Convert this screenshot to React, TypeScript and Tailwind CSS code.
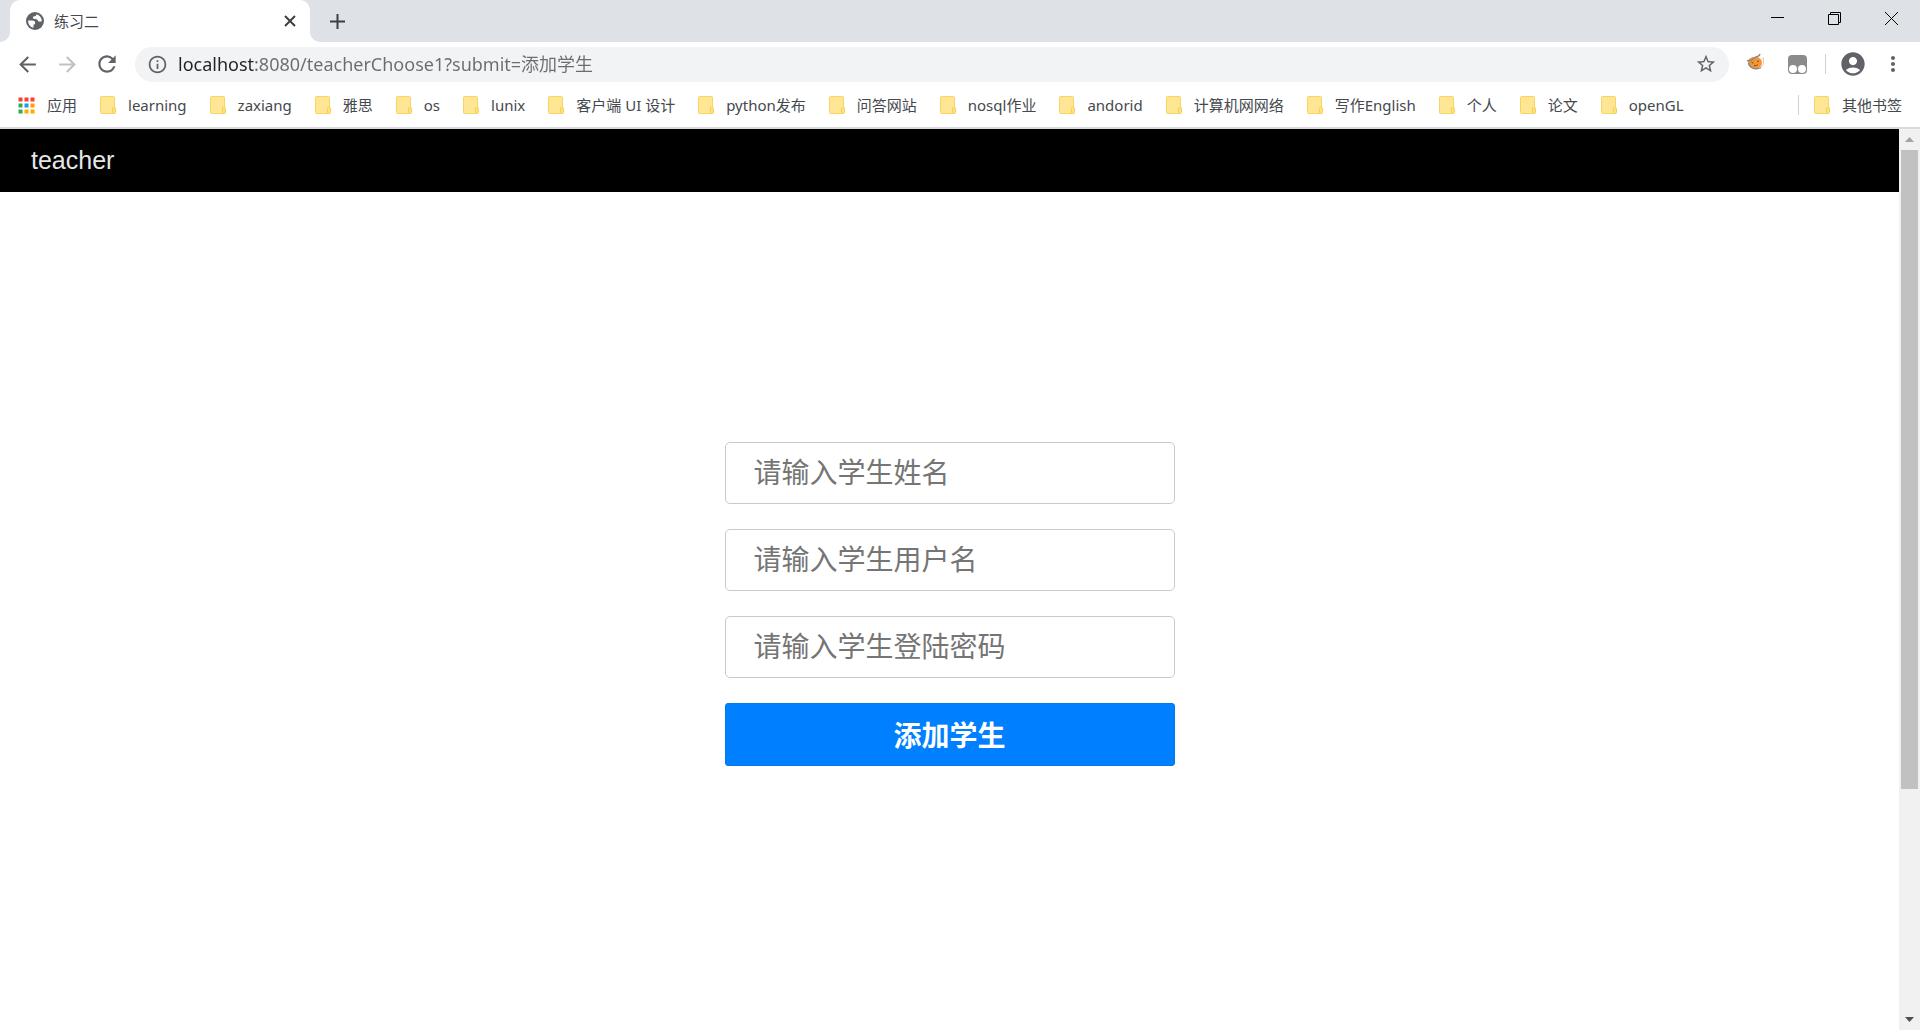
import type { ReactNode } from 'react';
import {
  MdAccountCircle,
  MdArrowBack,
  MdArrowForward,
  MdInfoOutline,
  MdMoreVert,
  MdRefresh,
  MdStarBorder,
} from 'react-icons/md';

const bookmarks = [
  'learning',
  'zaxiang',
  '雅思',
  'os',
  'lunix',
  '客户端 UI 设计',
  'python发布',
  '问答网站',
  'nosql作业',
  'andorid',
  '计算机网网络',
  '写作English',
  '个人',
  '论文',
  'openGL',
];

const fields = [
  { id: 'name', label: '请输入学生姓名', type: 'text' },
  { id: 'username', label: '请输入学生用户名', type: 'text' },
  { id: 'password', label: '请输入学生登陆密码', type: 'password' },
];

const appColors = [
  '#f44336', '#f44336', '#f44336',
  '#34a853', '#2196f3', '#ffa000',
  '#34a853', '#fbab00', '#fbab00',
];

const IconButton = ({
  label,
  className = 'w-10',
  children,
}: {
  label: string;
  className?: string;
  children: ReactNode;
}) => (
  <button
    type="button"
    aria-label={label}
    className={`flex h-full shrink-0 items-center justify-center ${className}`}
  >
    {children}
  </button>
);

const GlobeIcon = () => (
  <svg width="18" height="18" viewBox="0 0 18 18" className="shrink-0" aria-hidden="true">
    <circle cx="9" cy="9" r="9" fill="#5f6368" />
    <path
      d="M10.5 2.2c-.2 1.300-.9 2-2.200 2.100-1.200.1-1.500.8-1.300 1.700.2.900 1 1 2.200 1.100 1.800.1 2.800.9 3 2.400h3.600A7 7 0 0 0 10.500 2.200z"
      fill="#fff"
    />
    <path
      d="M2.100 8.500h4.200c1.800 0 2.900.8 2.900 2.400 0 1.100-.6 1.600-1.700 1.700v3.200A7 7 0 0 1 2.100 8.500z"
      fill="#fff"
    />
  </svg>
);

const FolderIcon = () => (
  <svg width="16" height="18" viewBox="0 0 16 18" className="shrink-0" aria-hidden="true">
    <rect x="0.5" y="0.5" width="14" height="17" rx="1" fill="#ffe694" stroke="#f7d560" />
    <rect x="12.500" y="11.500" width="3" height="6" rx="1" fill="#ffe27a" stroke="#f5cf55" />
  </svg>
);

const AppsIcon = () => (
  <svg width="17" height="17" viewBox="0 0 17 17" className="shrink-0" aria-hidden="true">
    {appColors.map((color, i) => (
      <rect
        key={i}
        x={(i % 3) * 6 + 0.5}
        y={Math.floor(i / 3) * 6 + 0.5}
        width="4"
        height="4"
        fill={color}
      />
    ))}
  </svg>
);

const Bookmark = ({ icon, children }: { icon: ReactNode; children: ReactNode }) => (
  <a href="#" className="flex shrink-0 items-center gap-3 whitespace-nowrap">
    {icon}
    {children}
  </a>
);

const TabStrip = () => (
  <div className="flex h-[42px] bg-[#dee1e6]">
    <svg width="10" height="10" className="shrink-0 self-end" aria-hidden="true">
      <path d="M10 0v10H0A10 10 0 0 0 10 0z" fill="#fff" />
    </svg>
    <div className="flex w-[300px] items-center rounded-t-[10px] bg-white pr-[14px] pl-4">
      <GlobeIcon />
      <span className="ml-[10px] flex-1 text-[15px] text-[#45494d]">练习二</span>
      <button type="button" aria-label="关闭标签页">
        <svg width="12" height="12" viewBox="0 0 12 12" aria-hidden="true">
          <path d="M1 1l10 10M11 1L1 11" stroke="#3c4043" strokeWidth="2" />
        </svg>
      </button>
    </div>
    <svg width="10" height="10" className="shrink-0 self-end" aria-hidden="true">
      <path d="M0 0v10h10A10 10 0 0 1 0 0z" fill="#fff" />
    </svg>
    <IconButton label="新标签页" className="w-[34px]">
      <svg width="15" height="15" viewBox="0 0 15 15" aria-hidden="true">
        <path d="M7.5 0v15M0 7.5h15" stroke="#3c4043" strokeWidth="2" />
      </svg>
    </IconButton>
    <div className="ml-auto flex h-9">
      <IconButton label="最小化" className="w-[57px]">
        <svg width="13" height="13" viewBox="0 0 13 13" aria-hidden="true">
          <path d="M0 5.5h13" stroke="#000" />
        </svg>
      </IconButton>
      <IconButton label="还原" className="w-[57px]">
        <svg width="13" height="13" viewBox="0 0 13 13" fill="none" stroke="#000" aria-hidden="true">
          <path d="M0.5 2.5h10v10h-10zM2.5 2.5v-2h10v10h-2" />
        </svg>
      </IconButton>
      <IconButton label="关闭" className="w-[57px]">
        <svg width="13" height="13" viewBox="0 0 13 13" aria-hidden="true">
          <path d="M0 0l13 13M13 0L0 13" stroke="#000" />
        </svg>
      </IconButton>
    </div>
  </div>
);

const Toolbar = () => (
  <div className="flex h-[44px] items-center px-[7px]">
    <IconButton label="后退">
      <MdArrowBack size={25} color="#5f6368" />
    </IconButton>
    <IconButton label="前进">
      <MdArrowForward size={25} color="#bfc1c3" />
    </IconButton>
    <IconButton label="重新加载">
      <MdRefresh size={26} color="#5f6368" />
    </IconButton>
    <div className="ml-2 flex h-[35px] min-w-0 flex-1 items-center rounded-full bg-[#f1f3f4] px-3">
      <MdInfoOutline size={21} color="#5f6368" className="shrink-0" />
      {/* the host part of the address is darker than the rest */}
      <input
        type="text"
        aria-label="地址栏"
        defaultValue="localhost:8080/teacherChoose1?submit=添加学生"
        className="ml-[10px] min-w-0 flex-1 bg-[linear-gradient(90deg,#202124_76px,#6a6d70_76px)] bg-clip-text text-[18px] text-transparent caret-black outline-none"
      />
      <button type="button" aria-label="为此标签页添加书签">
        <MdStarBorder size={22} color="#5f6368" />
      </button>
    </div>
    <IconButton label="扩展程序" className="ml-[5px] w-[42px]">
      <svg width="18" height="18" viewBox="0 0 18 18" className="mb-1" aria-hidden="true">
        <path d="M2 9c0-3 3-5.500 7-5 4 0 7 2 7 5.500S13 16 9.500 16 2 13 2 9z" fill="#f2963a" />
        <path
          d="M1 7.500c3 1 6-1 8-3s4 0 5-3.500M2.500 10c1 5 8 7.500 12.500 4.500"
          stroke="#8f8a86"
          strokeWidth="1.500"
          fill="none"
        />
        <path d="M5.500 9.500l2 .500M11 8.500l2-.500M8 12.500c1.500.500 3 0 4-1" stroke="#8a4a14" fill="none" />
        <path d="M16 6l1.500-1v6L15 14" stroke="#f6c79a" fill="none" />
      </svg>
    </IconButton>
    <IconButton label="Tampermonkey" className="w-[42px]">
      <svg width="19" height="19" viewBox="0 0 19 19" aria-hidden="true">
        <rect width="19" height="19" rx="4" fill="#8b8b8b" />
        <circle cx="5" cy="14" r="4" fill="#fff" />
        <circle cx="14" cy="14" r="4" fill="#fff" />
      </svg>
    </IconButton>
    <div className="ml-[7px] h-5 w-px bg-[#cfd1d4]" />
    <IconButton label="个人资料" className="ml-[7px] w-10">
      <MdAccountCircle size={28} color="#5f6368" />
    </IconButton>
    <IconButton label="菜单">
      <MdMoreVert size={24} color="#5f6368" />
    </IconButton>
  </div>
);

const BookmarksBar = () => (
  <nav className="flex h-[43px] items-center gap-[23px] border-b-2 border-[#d9dadd] pr-[18px] pb-[3px] pl-[18px] text-[15px] text-[#45494d]">
    <Bookmark icon={<AppsIcon />}>应用</Bookmark>
    {bookmarks.map((name) => (
      <Bookmark key={name} icon={<FolderIcon />}>
        {name}
      </Bookmark>
    ))}
    <div className="ml-auto flex items-center gap-[15px]">
      <div className="h-5 w-px bg-[#cfd1d4]" />
      <Bookmark icon={<FolderIcon />}>其他书签</Bookmark>
    </div>
  </nav>
);

const Scrollbar = () => (
  <div className="flex w-[21px] shrink-0 flex-col bg-[#f1f1f1]" aria-hidden="true">
    <div className="flex h-[21px] items-center justify-center">
      <svg width="9" height="5" viewBox="0 0 9 5">
        <path d="M0 5h9L4.5 0z" fill="#a3a3a3" />
      </svg>
    </div>
    <div className="flex-1 px-0.5">
      <div className="h-[74.4%] bg-[#c1c1c1]" />
    </div>
    <div className="flex h-[21px] items-center justify-center">
      <svg width="9" height="5" viewBox="0 0 9 5">
        <path d="M0 0h9L4.5 5z" fill="#505050" />
      </svg>
    </div>
  </div>
);

const StudentForm = () => (
  <form
    className="mx-auto mt-[250px] flex w-[450px] flex-col gap-[25px] text-[28px]"
    onSubmit={(e) => e.preventDefault()}
  >
    {fields.map(({ id, label, type }) => (
      <input
        key={id}
        id={id}
        type={type}
        placeholder={label}
        aria-label={label}
        className="h-[62px] rounded-[5px] border border-[#c8cacd] px-7 pb-0.5 outline-none placeholder:text-[#757575]"
      />
    ))}
    <button
      type="submit"
      className="h-[63px] rounded-[3px] border border-[#007bee] bg-[#0080ff] font-bold text-white"
    >
      添加学生
    </button>
  </form>
);

export default function App() {
  return (
    <div className="flex h-screen flex-col overflow-hidden bg-white font-['Noto_Sans','Noto_Sans_CJK_SC',sans-serif]">
      <TabStrip />
      <Toolbar />
      <BookmarksBar />
      <div className="flex min-h-0 flex-1">
        <main className="min-w-0 flex-1 overflow-hidden">
          <header className="flex h-[63px] items-center bg-black px-[31px] font-['Liberation_Sans',Arial,sans-serif] text-[25px] text-[#e6e6e6]">
            teacher
          </header>
          <StudentForm />
        </main>
        <Scrollbar />
      </div>
    </div>
  );
}
